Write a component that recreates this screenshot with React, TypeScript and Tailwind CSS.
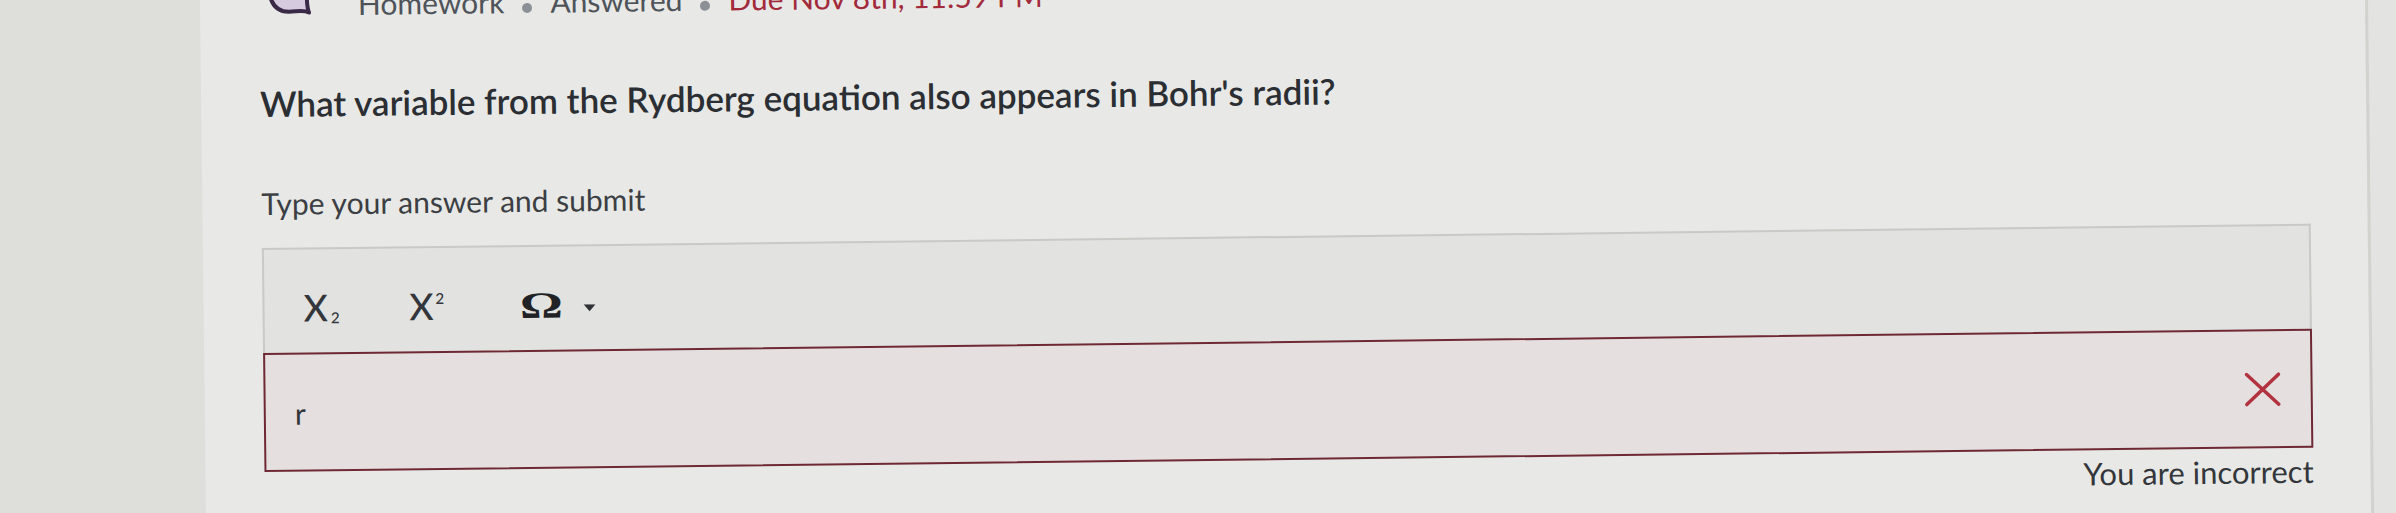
import React from "react";

function LogoBlob() {
  return (
    <svg width="50" height="36" viewBox="0 0 50 36" className="mb-[15px] shrink-0">
      <path
        d="M6 4 C6 24 14 32 26 32 C34 32 40 30 46 33 C44 28 44 24 44 18 L44 4 Z"
        fill="#d6cadf"
        stroke="#3a2946"
        strokeWidth="4"
        strokeLinejoin="round"
      />
    </svg>
  );
}

function Dot() {
  return <span className="inline-block w-[10px] h-[10px] rounded-full bg-[#8b9096] mb-[5px] shrink-0" />;
}

function WrongMark() {
  return (
    <svg width="38" height="36" viewBox="0 0 38 36" className="shrink-0">
      <path d="M3 3 L35 33 M35 3 L3 33" stroke="#b3323f" strokeWidth="3.5" strokeLinecap="round" fill="none" />
    </svg>
  );
}

export default function App() {
  return (
    <div className="w-[2396px] h-[513px] overflow-hidden bg-[#dedfdb] font-[Lato,sans-serif]">
      <div className="flex w-[2496px] h-[613px] -ml-[50px] -mt-[50px] origin-center rotate-[-0.68deg]">
        <div className="w-[253px] shrink-0 bg-[#dedfdb]" />
        <div className="w-[2165px] shrink-0 bg-[#e8e9e6] pl-[59px] pr-[57px] pt-[19px] flex flex-col">
          <div className="flex items-baseline h-[30px] text-[30px] leading-none pl-[4px]">
            <LogoBlob />
            <span className="ml-[45px] text-[#4e535a]">Homework</span>
            <span className="mx-[18px] flex items-baseline"><Dot /></span>
            <span className="text-[#4e535a]">Answered</span>
            <span className="mx-[18px] flex items-baseline"><Dot /></span>
            <span className="text-[#a32a3b]">Due Nov 8th, 11:59 PM</span>
          </div>
          <div className="mt-[76px] text-[35px] leading-none font-semibold text-[#2b2e33] whitespace-nowrap">
            What variable from the Rydberg equation also appears in Bohr's radii?
          </div>
          <div className="mt-[67px] text-[30px] leading-none text-[#3b3e43] whitespace-nowrap">
            Type your answer and submit
          </div>
          <div className="mt-[30px] h-[105px] border-2 border-b-0 border-[#c9cac6] bg-[#e2e3e0] flex items-center pl-[39px] pt-[12px] text-[#33363b]">
            <span className="flex items-baseline">
              <span className="text-[37px] leading-none font-medium">X</span>
              <span className="text-[15px] leading-none ml-[3px] translate-y-[2px] font-medium">2</span>
            </span>
            <span className="flex items-baseline ml-[70px]">
              <span className="text-[37px] leading-none font-medium">X</span>
              <span className="text-[15px] leading-none ml-[2px] -translate-y-[16px] font-medium">2</span>
            </span>
            <span className="ml-[82px] flex items-center">
              <span className="inline-block text-[37px] leading-none font-bold font-['Liberation_Serif',serif] text-[#202226] scale-x-[1.45] translate-y-[1px]">
                Ω
              </span>
              <svg width="12" height="8" viewBox="0 0 12 8" className="ml-[28px] translate-y-[4px]">
                <path d="M0 0 L12 0 L6 7 Z" fill="#2f3136" />
              </svg>
            </span>
          </div>
          <div className="h-[119px] border-2 border-[#6e2935] bg-[#e5e0df] flex items-center justify-between pl-[29px] pr-[29px]">
            <span className="text-[30px] leading-none text-[#33363b]">r</span>
            <WrongMark />
          </div>
          <div className="mt-[8px] self-end text-[31px] leading-none text-[#33363b] whitespace-nowrap">
            You are incorrect
          </div>
        </div>
        <div className="flex-1 border-l-[3px] border-[#d2d3cf] bg-[#e3e4e1]" />
      </div>
    </div>
  );
}
